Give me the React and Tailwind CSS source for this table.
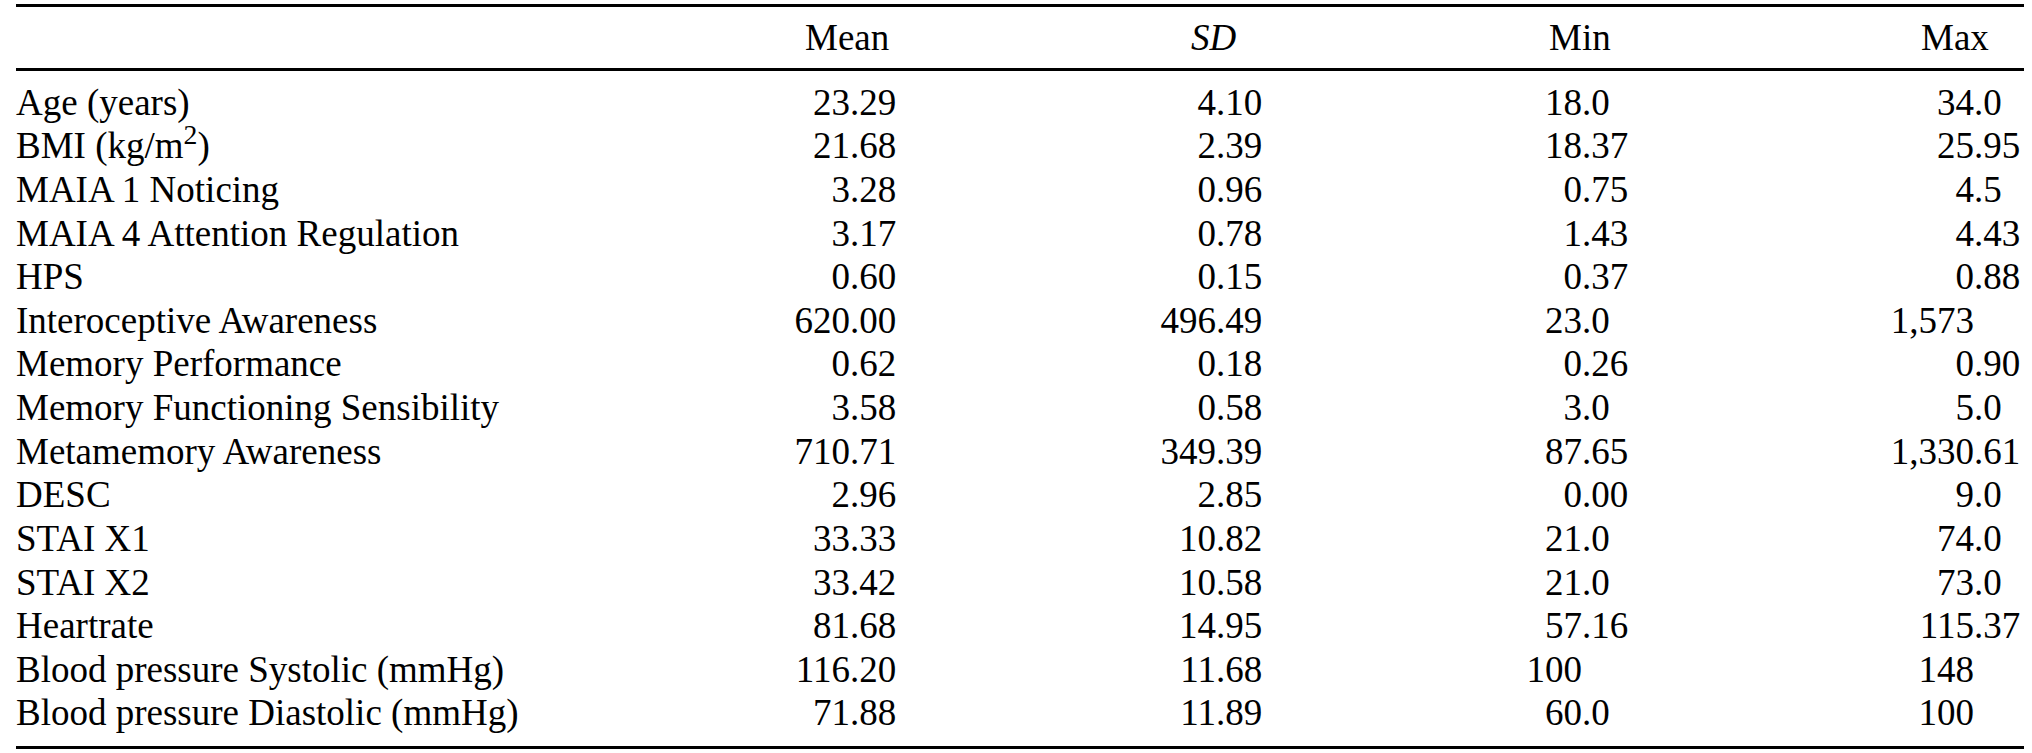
import React from "react";

const rows = [
  { label: "Age (years)", v: ["23.29", "4.10", "18.0", "34.0"] },
  { label: "BMI", sup: true, v: ["21.68", "2.39", "18.37", "25.95"] },
  { label: "MAIA 1 Noticing", v: ["3.28", "0.96", "0.75", "4.5"] },
  { label: "MAIA 4 Attention Regulation", v: ["3.17", "0.78", "1.43", "4.43"] },
  { label: "HPS", v: ["0.60", "0.15", "0.37", "0.88"] },
  { label: "Interoceptive Awareness", v: ["620.00", "496.49", "23.0", "1,573"] },
  { label: "Memory Performance", v: ["0.62", "0.18", "0.26", "0.90"] },
  { label: "Memory Functioning Sensibility", v: ["3.58", "0.58", "3.0", "5.0"] },
  { label: "Metamemory Awareness", v: ["710.71", "349.39", "87.65", "1,330.61"] },
  { label: "DESC", v: ["2.96", "2.85", "0.00", "9.0"] },
  { label: "STAI X1", v: ["33.33", "10.82", "21.0", "74.0"] },
  { label: "STAI X2", v: ["33.42", "10.58", "21.0", "73.0"] },
  { label: "Heartrate", v: ["81.68", "14.95", "57.16", "115.37"] },
  { label: "Blood pressure Systolic (mmHg)", v: ["116.20", "11.68", "100", "148"] },
  { label: "Blood pressure Diastolic (mmHg)", v: ["71.88", "11.89", "60.0", "100"] },
];

function split(s) {
  const i = s.indexOf(".");
  if (i < 0) return [s, ""];
  return [s.slice(0, i), s.slice(i)];
}

export default function App() {
  return (
    <div
      className="bg-white text-black w-[2032px] h-[753px] pl-[16px] pt-[4px]"
      style={{ fontFamily: '"Liberation Serif", "Times New Roman", serif' }}
    >
      <div className="w-[2008px] text-[37px] leading-[43.64px]">
        <div className="h-[3px] bg-black" />
        <div className="grid grid-cols-[684px_400px_350px_350px_224px] h-[43.64px] mt-[8.7px] whitespace-nowrap">
          <div />
          <div className="pl-[105px]">Mean</div>
          <div className="pl-[91px] italic">SD</div>
          <div className="pl-[99px]">Min</div>
          <div className="pl-[121px]">Max</div>
        </div>
        <div className="h-[3px] bg-black mt-[8.7px]" />
        <div className="grid grid-cols-[684px_150px_250px_116px_234px_132px_218px_174px_50px] pt-[9.7px] whitespace-nowrap">
          {rows.map((r, i) => (
            <React.Fragment key={i}>
              <div className="h-[43.64px]">
                {r.sup ? (
                  <>
                    BMI (kg/m<sup>2</sup>)
                  </>
                ) : (
                  r.label
                )}
              </div>
              {r.v.map((val, j) => {
                const [a, b] = split(val);
                return (
                  <React.Fragment key={j}>
                    <div className="h-[43.64px] text-right">{a}</div>
                    <div className="h-[43.64px] text-left">{b}</div>
                  </React.Fragment>
                );
              })}
            </React.Fragment>
          ))}
        </div>
        <div className="h-[3px] bg-black mt-[10.7px]" />
      </div>
    </div>
  );
}
